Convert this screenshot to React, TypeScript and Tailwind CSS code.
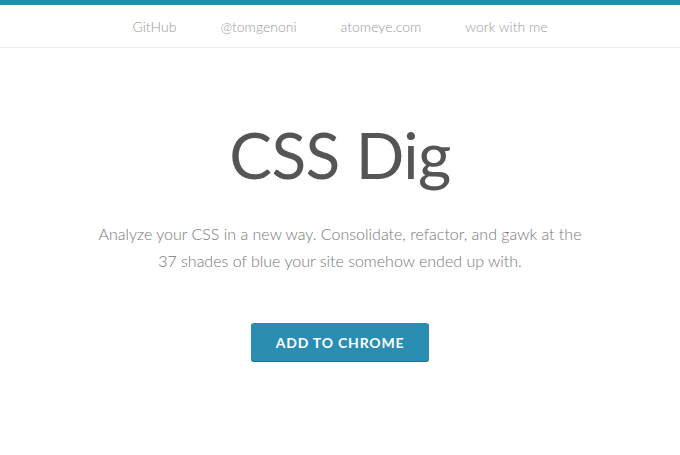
export default function App() {
  const links = ['GitHub', '@tomgenoni', 'atomeye.com', 'work with me'];

  return (
    <div className="min-h-[455px] bg-white" style={{ fontFamily: 'Lato, "Open Sans", sans-serif' }}>
      <div className="h-[5px] bg-[#2a8cac]" />
      <nav className="flex justify-center gap-[44px] h-[43px] items-center border-b border-[#ececec] text-[14px] font-light text-[#9a9a9a]">
        {links.map((l) => (
          <a key={l} href="#" className="pt-[1px]">{l}</a>
        ))}
      </nav>

      <main className="flex flex-col items-center text-center">
        <h1 className="mt-[75px] text-[64px] leading-none text-[#555555] font-normal tracking-[-0.5px]">CSS Dig</h1>
        <p className="mt-[33px] w-[500px] text-[16px] leading-[27px] font-light text-[#777777]">
          Analyze your CSS in a new way. Consolidate, refactor, and gawk at the 37 shades of blue your site somehow ended up with.
        </p>
        <button className="mt-[49px] w-[178px] h-[38px] rounded-[3px] bg-[#2a8db1] text-white text-[14px] font-bold tracking-[0.8px] shadow-[0_1px_0_#1f6f8c]">
          ADD TO CHROME
        </button>
      </main>
    </div>
  );
}
